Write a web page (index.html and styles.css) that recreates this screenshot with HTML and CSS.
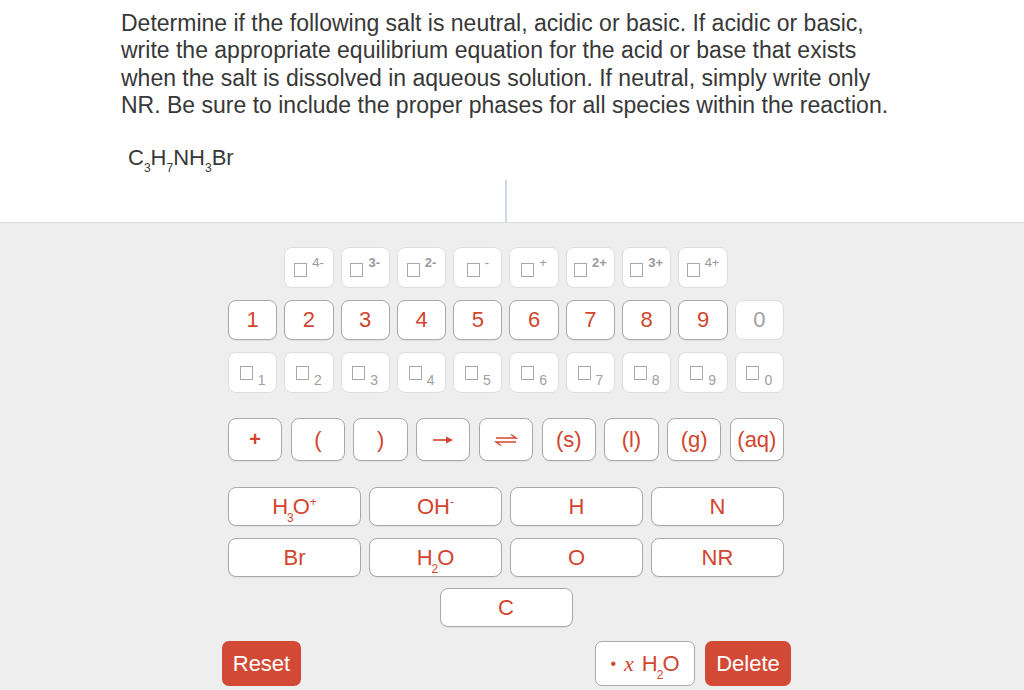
FILE: index.html
```html
<!DOCTYPE html>
<html>
<head>
<meta charset="utf-8">
<link rel="stylesheet" href="styles.css">
</head>
<body>
<div class="question">
  <p class="prompt">Determine if the following salt is neutral, acidic or basic. If acidic or basic, write the appropriate equilibrium equation for the acid or base that exists when the salt is dissolved in aqueous solution. If neutral, simply write only NR. Be sure to include the proper phases for all species within the reaction.</p>
  <div class="formula">C<sub>3</sub>H<sub>7</sub>NH<sub>3</sub>Br</div>
  <div class="answer"><span class="caret"></span></div>
</div>
<div class="keyboard">
  <div class="pad">
    <div class="grid10 row-charges">
      <span class="blank"></span>
      <div class="key light"><span class="box"></span><span class="sup">4-</span></div>
      <div class="key light"><span class="box"></span><span class="sup bold">3-</span></div>
      <div class="key light"><span class="box"></span><span class="sup bold">2-</span></div>
      <div class="key light"><span class="box"></span><span class="sup">-</span></div>
      <div class="key light"><span class="box"></span><span class="sup">+</span></div>
      <div class="key light"><span class="box"></span><span class="sup bold">2+</span></div>
      <div class="key light"><span class="box"></span><span class="sup bold">3+</span></div>
      <div class="key light"><span class="box"></span><span class="sup">4+</span></div>
    </div>
    <div class="grid10 row-numbers">
      <div class="key dark num">1</div>
      <div class="key dark num">2</div>
      <div class="key dark num">3</div>
      <div class="key dark num">4</div>
      <div class="key dark num">5</div>
      <div class="key dark num">6</div>
      <div class="key dark num">7</div>
      <div class="key dark num">8</div>
      <div class="key dark num">9</div>
      <div class="key light num grey">0</div>
    </div>
    <div class="grid10 row-subs">
      <div class="key light"><span class="box"></span><span class="subn">1</span></div>
      <div class="key light"><span class="box"></span><span class="subn">2</span></div>
      <div class="key light"><span class="box"></span><span class="subn">3</span></div>
      <div class="key light"><span class="box"></span><span class="subn">4</span></div>
      <div class="key light"><span class="box"></span><span class="subn">5</span></div>
      <div class="key light"><span class="box"></span><span class="subn">6</span></div>
      <div class="key light"><span class="box"></span><span class="subn">7</span></div>
      <div class="key light"><span class="box"></span><span class="subn">8</span></div>
      <div class="key light"><span class="box"></span><span class="subn">9</span></div>
      <div class="key light"><span class="box"></span><span class="subn">0</span></div>
    </div>
    <div class="grid9 row-symbols">
      <div class="key dark sym plus">+</div>
      <div class="key dark sym">(</div>
      <div class="key dark sym">)</div>
      <div class="key dark sym">
        <svg width="22" height="12" viewBox="0 0 22 12"><path d="M1 6 H17" stroke="#d2452f" stroke-width="1.6"/><path d="M14 2.5 L21 6 L14 9.5 Z" fill="#d2452f"/></svg>
      </div>
      <div class="key dark sym">
        <svg width="24" height="14" viewBox="0 0 24 14"><path d="M2 5 H22 L17 1.5" stroke="#d2452f" stroke-width="1.4" fill="none"/><path d="M22 9 H2 L7 12.5" stroke="#d2452f" stroke-width="1.4" fill="none"/></svg>
      </div>
      <div class="key dark sym">(s)</div>
      <div class="key dark sym">(l)</div>
      <div class="key dark sym">(g)</div>
      <div class="key dark sym">(aq)</div>
    </div>
    <div class="grid4 row-el1">
      <div class="key dark el"><span>H<sub>3</sub>O<sup>+</sup></span></div>
      <div class="key dark el"><span>OH<sup>-</sup></span></div>
      <div class="key dark el"><span>H</span></div>
      <div class="key dark el"><span>N</span></div>
    </div>
    <div class="grid4 row-el2">
      <div class="key dark el"><span>Br</span></div>
      <div class="key dark el"><span>H<sub>2</sub>O</span></div>
      <div class="key dark el"><span>O</span></div>
      <div class="key dark el"><span>NR</span></div>
    </div>
    <div class="row-el3">
      <div class="key dark el c"><span>C</span></div>
    </div>
  </div>
  <div class="bottom">
    <div class="btn red reset">Reset</div>
    <div class="right">
      <div class="btn water"><span class="dot">•</span><span class="x">x</span><span class="h2o">H<sub>2</sub>O</span></div>
      <div class="btn red delete">Delete</div>
    </div>
  </div>
</div>
</body>
</html>
```

FILE: styles.css
```css
html, body {
  margin: 0;
  padding: 0;
  background: #eeeeee;
  font-family: "Liberation Sans", Arial, sans-serif;
}

.question {
  box-sizing: border-box;
  height: 223px;
  background: #ffffff;
  border-bottom: 1px solid #dcdcdc;
  padding: 10px 0 0 121px;
}

.prompt {
  margin: 0;
  width: 785px;
  font-size: 23px;
  line-height: 27.3px;
  color: #383838;
}

.formula {
  margin: 27px 0 0 7px;
  font-size: 22px;
  line-height: 24px;
  color: #383838;
}

.formula sub {
  font-size: 12px;
  line-height: 0;
  vertical-align: -7px;
  margin: 0 0 0 0;
}

.answer {
  margin-top: 10px;
  padding-left: 384px;
  height: 42px;
}

.caret {
  display: block;
  width: 2px;
  height: 42px;
  background: #c9d8ea;
}

.pad {
  margin-left: 228px;
  width: 556px;
  padding-top: 24px;
}

.grid10 {
  display: grid;
  grid-template-columns: repeat(10, 1fr);
  column-gap: 7px;
}

.grid9 {
  display: grid;
  grid-template-columns: repeat(9, 1fr);
  column-gap: 8.5px;
}

.grid4 {
  display: grid;
  grid-template-columns: repeat(4, 1fr);
  column-gap: 8px;
}

.row-charges .key { height: 41px; }
.row-numbers { margin-top: 12px; }
.row-numbers .key { height: 40px; }
.row-subs { margin-top: 12px; }
.row-subs .key { height: 41px; }
.row-symbols { margin-top: 25px; }
.row-symbols .key { height: 43px; }
.row-el1 { margin-top: 26px; }
.row-el1 .key, .row-el2 .key, .row-el3 .key { height: 39px; }
.row-el2 { margin-top: 12px; }
.row-el3 { margin-top: 11px; display: flex; justify-content: center; }

.key {
  box-sizing: border-box;
  background: #ffffff;
  border-radius: 8px;
  display: flex;
  align-items: center;
  justify-content: center;
  color: #d2452f;
}

.key.light { border: 1px solid #dedede; }
.key.dark { border: 1px solid #a9a9a9; box-shadow: 0 1px 1px rgba(0,0,0,0.06); }

.box {
  display: inline-block;
  box-sizing: border-box;
  width: 13px;
  height: 14px;
  border: 1.6px solid #a8a8a8;
}

.row-charges .box { margin-top: 5px; }

.sup {
  font-size: 13px;
  color: #999999;
  margin-left: 5px;
  margin-top: -10px;
}
.sup.bold { font-weight: bold; font-size: 13px; }

.subn {
  font-size: 14px;
  color: #a0a0a0;
  margin-left: 5px;
  margin-top: 14px;
}

.num { font-size: 22px; }
.num.grey { color: #a0a0a0; }

.sym { font-size: 22px; }
.sym.plus { font-size: 20px; font-weight: bold; }

.el { font-size: 22px; }
.el sub {
  font-size: 12px;
  line-height: 0;
  vertical-align: -8px;
  margin: 0 -1px 0 -1px;
}
.el sup {
  font-size: 12px;
  line-height: 0;
  vertical-align: 8px;
  margin-left: 0;
}

.c { width: 133px; }

.bottom {
  margin: 14px 0 0 222px;
  width: 569px;
  display: flex;
  justify-content: space-between;
}

.right {
  display: flex;
  gap: 10px;
}

.btn {
  box-sizing: border-box;
  height: 45px;
  border-radius: 7px;
  display: flex;
  align-items: center;
  justify-content: center;
  font-size: 22px;
}

.red {
  background: #d24a35;
  color: #ffffff;
}

.reset { width: 79px; }
.delete { width: 86px; }

.water {
  width: 100px;
  background: #ffffff;
  border: 1px solid #a9a9a9;
  color: #d2452f;
}

.water .dot { font-size: 16px; margin-right: 8px; }
.water .x {
  font-family: "Liberation Serif", serif;
  font-style: italic;
  font-size: 22px;
  margin-right: 8px;
}
.water sub {
  font-size: 12px;
  line-height: 0;
  vertical-align: -8px;
  margin: 0 -1px 0 -1px;
}
```
